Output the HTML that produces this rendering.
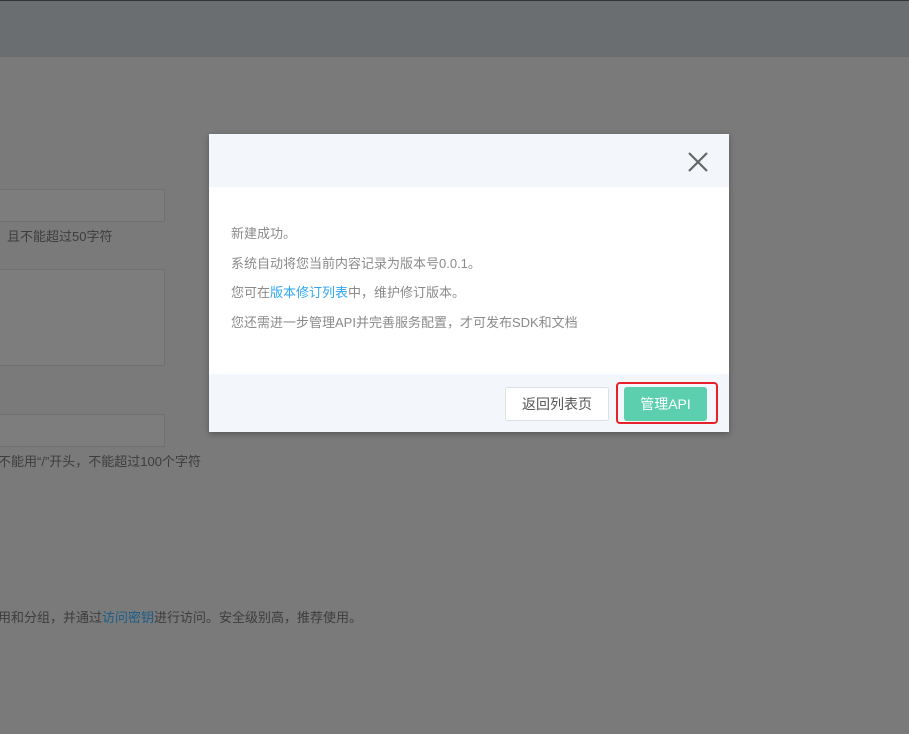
<!DOCTYPE html>
<html><head><meta charset="utf-8"><style>
*{margin:0;padding:0;box-sizing:border-box}
body{width:909px;height:734px;overflow:hidden;background:#7a7a7a;font-family:"Liberation Sans","Noto Sans CJK SC",sans-serif;position:relative}
.top{position:absolute;left:0;top:0;width:909px;height:57px;background:#6b6e71;border-top:1px solid #333}
.box{position:absolute;left:-2px;width:167px;border:1px solid #6e7073;background:#7d7d7d}
.t{position:absolute;font-size:13px;color:#3d3d3d;white-space:nowrap}
.modal{position:absolute;left:209px;top:134px;width:520px;height:298px;background:#fff;box-shadow:0 2px 6px rgba(0,0,0,.3)}
.hd{height:53px;background:#f3f6fa;position:relative}
.ft{position:absolute;left:0;top:240px;width:520px;height:58px;background:#f3f6fa}
.bd{padding-top:37px;padding-left:22px;font-size:13px;color:#8a8a8a}
.bd p{height:29.6px;line-height:20px}
.btn{position:absolute;top:13px;height:34px;border-radius:3px;font-size:14px;text-align:center;line-height:34px}
</style></head><body>
<div class="top"></div>
<div class="box" style="top:189px;height:33px"></div>
<div class="t" style="left:7px;top:226px">且不能超过50字符</div>
<div class="box" style="top:269px;height:97px"></div>
<div class="box" style="top:414px;height:33px"></div>
<div class="t" style="left:-2px;top:451px">不能用“/”开头，不能超过100个字符</div>
<div class="t" style="left:-2px;top:607px">用和分组，并通过<span style="color:#1a5d8a">访问密钥</span>进行访问。安全级别高，推荐使用。</div>
<div class="modal">
<div class="hd"><svg style="position:absolute;left:478px;top:17px" width="22" height="22" viewBox="0 0 22 22"><path d="M2 2L20 20M20 2L2 20" stroke="#666" stroke-width="2.2"/></svg></div>
<div class="bd">
<p>新建成功。</p>
<p>系统自动将您当前内容记录为版本号0.0.1。</p>
<p>您可在<span style="color:#2ea6f5">版本修订列表</span>中，维护修订版本。</p>
<p>您还需进一步管理API并完善服务配置，才可发布SDK和文档</p>
</div>
<div class="ft">
<div class="btn" style="left:296px;width:104px;background:#fff;border:1px solid #dcdfe6;color:#555;line-height:32px">返回列表页</div>
<div style="position:absolute;left:407px;top:8px;width:102px;height:42px;border:2px solid #e8202a;border-radius:4px"></div>
<div class="btn" style="left:415px;width:83px;background:#5ccfae;color:#fff">管理API</div>
</div>
</div>
</body></html>
